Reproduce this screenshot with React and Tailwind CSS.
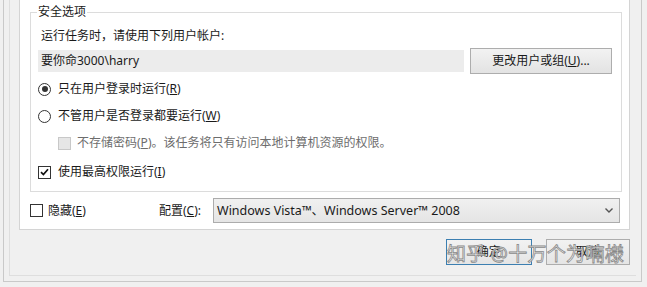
import React from "react";

const font = { fontFamily: '"Noto Sans", "Noto Sans CJK SC", sans-serif' };

const Radio = ({ checked }) => (
  <span className="w-[13px] h-[13px] rounded-full border border-[#333] bg-white flex items-center justify-center shrink-0">
    {checked && <span className="w-[6px] h-[6px] rounded-full bg-[#333]" />}
  </span>
);

const Check = ({ checked, disabled }) => (
  <span
    className={`w-[13px] h-[13px] border flex items-center justify-center shrink-0 ${
      disabled ? "border-[#c8c8c8] bg-[#e6e6e6]" : "border-[#333] bg-white"
    }`}
  >
    {checked && (
      <svg width="9" height="8" viewBox="0 0 9 8">
        <path d="M1 4.2 L3.4 6.6 L8 1.2" fill="none" stroke="#111" strokeWidth="1.7" />
      </svg>
    )}
  </span>
);

const Option = ({ children, className = "" }) => (
  <div className={`h-[16px] flex items-center ${className}`}>{children}</div>
);

export default function App() {
  return (
    <div
      className="w-[647px] h-[287px] bg-[#f0f0f0] overflow-hidden relative text-[12px] leading-[16px] text-[#1a1a1a]"
      style={font}
    >
      <div className="pl-[3px] pr-[5px]">
        <div className="h-[282px] border-l border-r border-b border-[#c9c9c9] pl-[5px] pr-[5px] pb-[5px]">
          <div className="h-full border-l border-b border-[#dedede] pl-[9px] pr-[6px]">
            {/* tab page */}
            <div className="h-[230px] bg-white border-l border-r border-b border-[#d4d4d4] pl-[10px] pr-[7px]">
              <div className="h-[12px]" />
              <div className="relative h-[180px] border border-[#dcdcdc] pl-[7px] pr-[9px] flex flex-col">
                <span className="absolute -top-[9px] left-[6px] bg-white px-[1px]">安全选项</span>
                <div className="mt-[15px] pl-[3px] h-[16px]">运行任务时，请使用下列用户帐户:</div>
                <div className="mt-[4px] h-[26px] flex items-center gap-[6px]">
                  <div className="w-[426px] h-[22px] bg-[#ececec] pl-[3px] flex items-center">要你命3000\harry</div>
                  <button className="w-[142px] h-[26px] border border-[#adadad] bg-linear-to-b from-[#f2f2f2] to-[#e3e3e3] flex items-center justify-center">
                    <span>
                      更改用户或组(<u>U</u>)...
                    </span>
                  </button>
                </div>
                <Option className="mt-[7px] gap-[7px]">
                  <Radio checked />
                  <span>
                    只在用户登录时运行(<u>R</u>)
                  </span>
                </Option>
                <Option className="mt-[11px] gap-[7px]">
                  <Radio />
                  <span>
                    不管用户是否登录都要运行(<u>W</u>)
                  </span>
                </Option>
                <Option className="mt-[11px] pl-[20px] gap-[6px] text-[#6d6d6d]">
                  <Check disabled />
                  <span>
                    不存储密码(<u>P</u>)。该任务将只有访问本地计算机资源的权限。
                  </span>
                </Option>
                <Option className="mt-[13px] gap-[7px]">
                  <Check checked />
                  <span>
                    使用最高权限运行(<u>I</u>)
                  </span>
                </Option>
              </div>
              <div className="mt-[6px] h-[25px] flex items-center">
                <div className="w-[129px] flex items-center gap-[5px]">
                  <Check />
                  <span>
                    隐藏(<u>E</u>)
                  </span>
                </div>
                <div className="w-[54px]">
                  配置(<u>C</u>):
                </div>
                <div className="w-[407px] h-[25px] border border-[#acacac] bg-linear-to-b from-[#f0f0f0] to-[#e5e5e5] flex items-center pl-[3px] pr-[6px] text-[12.5px]">
                  <span className="flex-1">Windows Vista™、Windows Server™ 2008</span>
                  <svg width="8" height="5" viewBox="0 0 8 5">
                    <path d="M0.5 0.5 L4 4 L7.5 0.5" fill="none" stroke="#555" strokeWidth="1.4" />
                  </svg>
                </div>
              </div>
            </div>
            <div className="mt-[9px] flex gap-[14px] pl-[427px]">
              <button className="w-[86px] h-[26px] border border-[#3c7fb1] bg-linear-to-b from-[#f2f2f2] to-[#e5e5e5] flex items-center justify-center">
                确定
              </button>
              <button className="w-[85px] h-[26px] border border-[#adadad] bg-linear-to-b from-[#f2f2f2] to-[#e5e5e5] flex items-center justify-center">
                取消
              </button>
            </div>
          </div>
        </div>
      </div>
      <div className="absolute left-[447px] top-[243px] text-[19px] leading-[22px] tracking-[0.3px] text-[rgba(255,255,255,0.85)] [-webkit-text-stroke:0.8px_#888] whitespace-nowrap">
        知乎 @十万个为喃様
      </div>
    </div>
  );
}
